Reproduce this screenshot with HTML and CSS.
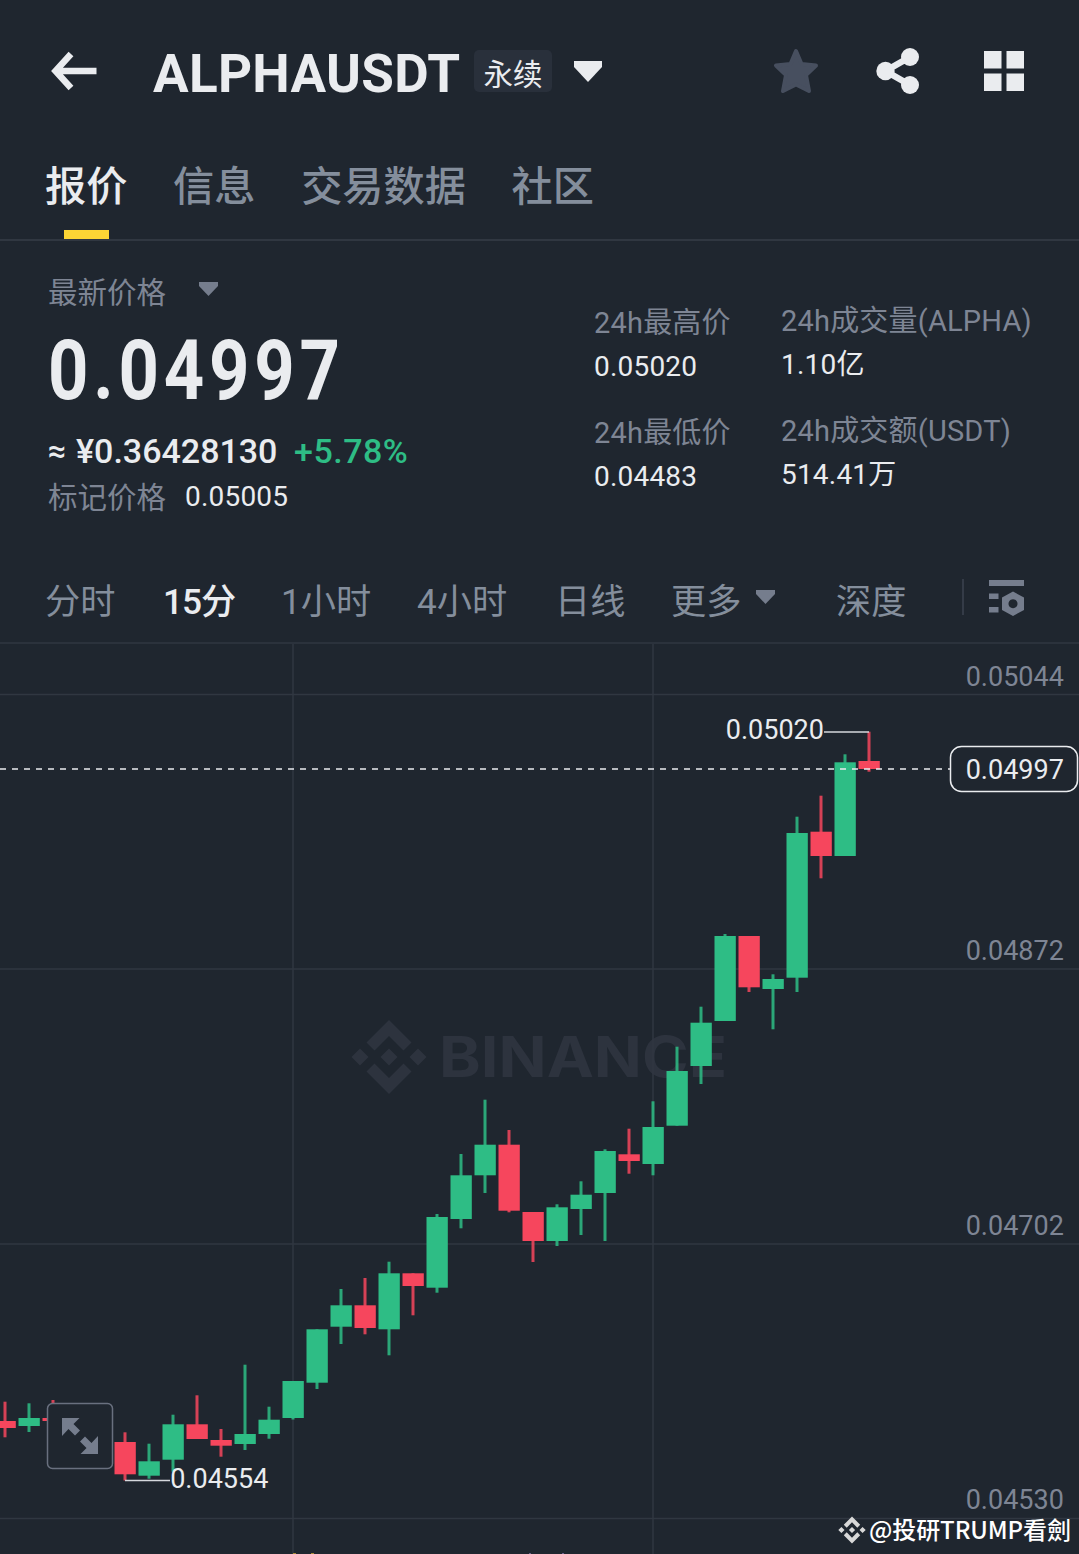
FILE: index.html
```html
<!DOCTYPE html>
<html lang="zh-CN">
<head>
    <meta charset="UTF-8">
    <meta name="viewport" content="width=device-width, initial-scale=1.0">
    <title>ALPHAUSDT 永续</title>
    <link rel="stylesheet" href="styles.css">
</head>
<body>
    <header class="header">
        <svg class="back" width="46" height="40" viewBox="0 0 46 40">
            <path d="M20 3 L4.500 20 L20 37 M5 20 H45.500" fill="none" stroke="#eaecef" stroke-width="6.500"/>
        </svg>
        <h1 class="symbol">ALPHAUSDT</h1>
        <span class="badge">永续</span>
        <svg class="caret" width="28" height="21" viewBox="0 0 28 21">
            <path d="M0 0 H28 V6 L14 21 L0 6 Z" fill="#eaecef"/>
        </svg>
        <div class="actions">
            <svg width="46" height="46" viewBox="0 0 46 46">
                <path d="M23 3 L28.500 16 L43 17.500 L33 27 L36 43 L23 36.500 L10 43 L13 27 L3 17.500 L17.500 16 Z" fill="#474f5f" stroke="#474f5f" stroke-width="4" stroke-linejoin="round"/>
            </svg>
            <svg width="44" height="46" viewBox="0 0 44 46">
                <path d="M34 9 L9.500 23 L34 37" fill="none" stroke="#eaecef" stroke-width="6.500"/>
                <circle cx="34" cy="9" r="9" fill="#eaecef"/>
                <circle cx="9.500" cy="23" r="9.200" fill="#eaecef"/>
                <circle cx="34" cy="37" r="9" fill="#eaecef"/>
            </svg>
            <svg width="40" height="40" viewBox="0 0 40 40">
                <path d="M0 0h17.500v17.500H0z M22.500 0H40v17.500H22.500z M0 22.500h17.500V40H0z M22.500 22.500H40V40H22.500z" fill="#eaecef"/>
            </svg>
        </div>
    </header>

    <nav class="tabs">
        <a class="tab active">报价</a>
        <a class="tab">信息</a>
        <a class="tab">交易数据</a>
        <a class="tab">社区</a>
    </nav>

    <section class="quote">
        <div class="price-block">
            <div class="row label">最新价格
                <svg class="caret-small" width="19" height="14" viewBox="0 0 19 14"><path d="M0 0 H19 V4 L9.500 14 L0 4 Z" fill="#757d8d"/></svg>
            </div>
            <div class="price">0.04997</div>
            <div class="row fiat">
                <span class="approx">≈</span>
                <span class="cny">¥0.36428130</span>
                <span class="change">+5.78%</span>
            </div>
            <div class="row mark"><span class="label">标记价格</span><span>0.05005</span></div>
        </div>
        <div class="stats">
            <div class="label">24h最高价</div>
            <div class="value">0.05020</div>
            <div class="label">24h最低价</div>
            <div class="value">0.04483</div>
        </div>
        <div class="stats volume">
            <div class="label">24h成交量(ALPHA)</div>
            <div class="value">1.10亿</div>
            <div class="label">24h成交额(USDT)</div>
            <div class="value">514.41万</div>
        </div>
    </section>

    <nav class="intervals">
        <a>分时</a>
        <a class="active">15分</a>
        <a>1小时</a>
        <a>4小时</a>
        <a>日线</a>
        <a class="more">更多
            <svg width="19" height="14" viewBox="0 0 19 14"><path d="M0 0 H19 V4 L9.500 14 L0 4 Z" fill="#757d8d"/></svg>
        </a>
        <a>深度</a>
        <span class="divider"></span>
        <svg class="settings" width="36" height="37" viewBox="0 0 36 37">
            <path d="M0 1h35v6H0z M0 14.500h9.500v5.500H0z M0 28h9.500v5.500H0z" fill="#757d8d"/>
            <path fill-rule="evenodd" d="M24 12.500 L35 18.500 V31 L24 37 L13 31 V18.500 Z M24 20.200 a4.500 4.500 0 1 0 .01 0 Z" fill="#757d8d"/>
        </svg>
    </nav>

    <svg class="chart" width="1079" height="910" viewBox="0 644 1079 910">
        <defs>
            <g id="logo">
                <path d="M0 -37 L22.500 -14.500 L14.500 -6.500 L0 -21 L-14.500 -6.500 L-22.500 -14.500 Z"/>
                <path d="M0 37 L22.500 14.500 L14.500 6.500 L0 21 L-14.500 6.500 L-22.500 14.500 Z"/>
                <path d="M0 -8.500 L8.500 0 L0 8.500 L-8.500 0 Z M-29 -8.500 L-20.500 0 L-29 8.500 L-37.500 0 Z M29 -8.500 L37.500 0 L29 8.500 L20.500 0 Z"/>
            </g>
        </defs>

        <g class="watermark">
            <use href="#logo" x="389" y="1057"/>
            <text x="439" y="1077" textLength="288" lengthAdjust="spacingAndGlyphs">BINANCE</text>
        </g>

        <path class="grid" d="M0 694.500H1079 M0 969H1079 M0 1244H1079 M0 1518.500H1079 M293 644V1554 M653 644V1554"/>

        <g id="candles"></g>

        <!-- tops of the volume legend -->
        <path d="M293 1553h3v1h-3z M311 1553h3v1h-3z" fill="#a88a35"/>
        <path d="M529 1553h2v1h-2z M562 1553h2v1h-2z" fill="#6c648f"/>

        <path class="dash" d="M0 769H950"/>
        <path class="pointer" d="M824 732H869 M125 1480.500H170"/>

        <g class="axis">
            <text x="965.700" y="686">0.05044</text>
            <text x="965.700" y="960">0.04872</text>
            <text x="965.700" y="1235">0.04702</text>
            <text x="965.700" y="1509">0.04530</text>
        </g>
        <g class="axis bright">
            <text x="725.800" y="739">0.05020</text>
            <text x="170.200" y="1488">0.04554</text>
            <rect x="950.500" y="746.500" width="127" height="45" rx="11"/>
            <text x="965.700" y="779">0.04997</text>
        </g>

        <g class="expand">
            <rect x="47.500" y="1403.500" width="65" height="65" rx="5"/>
            <path d="M62 1418 H79.500 L73.500 1424 L80 1430.500 L75 1435.500 L68.500 1429 L62 1436 Z"/>
            <path d="M98 1454 H80.500 L86.500 1448 L80 1441.500 L85 1436.500 L91.500 1443 L98 1436 Z"/>
        </g>

        <g class="author">
            <use href="#logo" transform="translate(852 1530) scale(.365)"/>
            <text x="869" y="1539" textLength="202">@投研TRUMP看劍</text>
        </g>
    </svg>

    <script>
        // [x, high, body top, body bottom, low, up?]
        const candles = [
            [5, 1401.7, 1421, 1428, 1437.3, 0],
            [29, 1403.3, 1418, 1426, 1432, 1],
            [53, 1400, 1418, 1421, 1425, 0],
            [125, 1432.3, 1442, 1474.3, 1480.5, 0],
            [149, 1443.7, 1461.3, 1475.7, 1478.7, 1],
            [173, 1414.7, 1424.3, 1459.7, 1471.7, 1],
            [197, 1395.3, 1424.3, 1439, 1439, 0],
            [221, 1429, 1440, 1445.7, 1456.7, 0],
            [245, 1364.7, 1434, 1444, 1450, 1],
            [269, 1406.7, 1419.7, 1434, 1438.7, 1],
            [293, 1381, 1381, 1418, 1419.5, 1],
            [317, 1329.3, 1329.3, 1382.7, 1389, 1],
            [341, 1289, 1305.3, 1326.7, 1344, 1],
            [365, 1278, 1305.3, 1328, 1334.3, 0],
            [389, 1261.7, 1273.3, 1329.3, 1355.3, 1],
            [413, 1273.3, 1273.3, 1286, 1315.3, 0],
            [437, 1214, 1217, 1287.7, 1292.7, 1],
            [461, 1154, 1175.3, 1219, 1228.3, 1],
            [485, 1099.7, 1144.7, 1175.3, 1193, 1],
            [509, 1130, 1144.7, 1210.7, 1212.3, 0],
            [533, 1212, 1212, 1241, 1262, 0],
            [557, 1204.3, 1207.3, 1241, 1246, 1],
            [581, 1181.3, 1194.7, 1209, 1235, 1],
            [605, 1149.3, 1151, 1193, 1241, 1],
            [629, 1128.7, 1154.3, 1161, 1173.7, 0],
            [653, 1101.3, 1127, 1164, 1175.3, 1],
            [677, 1046.7, 1071, 1125.7, 1125.7, 1],
            [701, 1006.7, 1022.7, 1066, 1084, 1],
            [725, 934, 936, 1021, 1021, 1],
            [749, 936, 936, 987.3, 992, 0],
            [773, 974.3, 979, 989, 1029.3, 1],
            [797, 816.7, 833, 977.7, 992, 1],
            [821, 795.7, 831.7, 856, 878.3, 0],
            [845, 754.3, 762.3, 856, 856, 1],
            [869, 731.7, 761, 769, 771.7, 0]
        ];

        document.getElementById('candles').innerHTML = candles.map(function([x, high, top, bottom, low, up]) {
            return `<g class="${up ? 'up' : 'down'}">
                <rect class="wick" x="${x - 1.5}" y="${high}" width="3" height="${low - high}"/>
                <rect x="${x - 10.5}" y="${top}" width="21.3" height="${bottom - top}"/>
            </g>`;
        }).join('');
    </script>
</body>
</html>
```
FILE: styles.css
```css
* {
    box-sizing: border-box;
}
body {
    margin: 0;
    width: 1079px;
    height: 1554px;
    overflow: hidden;
    background-color: #1f262f;
    color: #eaecef;
    font-family: Roboto, "Noto Sans CJK SC", sans-serif;
}
svg {
    display: block;
    flex-shrink: 0;
}
.header {
    display: flex;
    align-items: center;
    height: 142px;
    padding: 0 55px 0 51px;
}
.symbol {
    width: 308px;
    margin: 0 13px 0 56px;
    padding-top: 5px;
    font-size: 53px;
    line-height: 60px;
    font-weight: 700;
    letter-spacing: .3px;
    white-space: nowrap;
}
.badge {
    width: 78px;
    height: 42px;
    padding-top: 2px;
    border-radius: 5px;
    background-color: #29303b;
    font-size: 29.5px;
    line-height: 46px;
    text-align: center;
}
.caret {
    margin-left: 22px;
}
.actions {
    display: flex;
    align-items: center;
    margin-left: auto;
}
.actions svg:nth-child(2) {
    margin: 0 64px 0 57px;
}
.tabs {
    display: flex;
    gap: 45.7px;
    height: 99px;
    padding-left: 45px;
    border-bottom: 2px solid #303741;
    font-size: 41.2px;
    line-height: 90px;
    font-weight: 500;
    color: #848e9c;
}
.tab.active {
    color: #eaecef;
}
.tab.active::after {
    content: "";
    display: block;
    width: 45px;
    height: 9px;
    margin: -2px auto 0;
    background-color: #fcd535;
}
.quote {
    display: grid;
    grid-template-columns: 546px 187px auto;
    height: 317px;
    padding: 32px 0 0 48px;
    line-height: 40px;
}
.label {
    color: #7e8594;
}
.row {
    display: flex;
    align-items: center;
    height: 40px;
    font-size: 29.5px;
}
.caret-small {
    margin: -8px 0 0 33px;
}
.price {
    width: 350px;
    margin: 18px 0 20px;
    font-size: 83px;
    line-height: 80px;
    font-weight: 700;
    letter-spacing: 5.6px;
    transform: scaleX(.85);
    transform-origin: left;
}
.fiat {
    font-size: 34px;
    font-weight: 500;
}
.approx {
    width: 28px;
    font-size: 32px;
}
.cny {
    width: 218px;
}
.change {
    color: #2ebd85;
    letter-spacing: .5px;
}
.mark {
    margin-top: 6px;
    font-size: 28px;
    letter-spacing: .2px;
}
.mark .label {
    width: 137px;
    padding-top: 2px;
    font-size: 29.5px;
    letter-spacing: 0;
}
.stats {
    padding-top: 30px;
    font-size: 29px;
    letter-spacing: .2px;
    white-space: nowrap;
}
.stats .label {
    height: 40px;
}
.stats .value {
    margin: 4px 0 26px;
    font-size: 28px;
}
.volume {
    padding-top: 28px;
}
.intervals {
    display: grid;
    grid-template-columns: 118px 118px 136px 138px 116px 165px 126px 27px auto;
    align-items: center;
    height: 86px;
    padding-left: 45px;
    border-bottom: 2px solid #2b323c;
    font-size: 35.2px;
    line-height: 80px;
    color: #848e9c;
}
.intervals a {
    padding-top: 4px;
}
.intervals .active {
    color: #eaecef;
    font-weight: 500;
    letter-spacing: -1px;
}
.more {
    display: flex;
    align-items: center;
    gap: 15px;
}
.more svg {
    margin-top: -10px;
}
.divider {
    width: 2px;
    height: 36px;
    margin-top: -6px;
    background-color: #343b47;
}
.settings {
    margin-top: -5px;
}
.watermark {
    fill: #2d333e;
    font-family: Inter, sans-serif;
    font-size: 56px;
    font-weight: 700;
}
.grid {
    fill: none;
    stroke: #303741;
    stroke-width: 1.5;
}
.up {
    fill: #2ebd85;
}
.down {
    fill: #f6465d;
}
.wick {
    opacity: .85;
}
.dash {
    stroke: #eaecef;
    stroke-width: 1.5;
    stroke-dasharray: 6 6;
}
.pointer {
    stroke: #d5d8dd;
    stroke-width: 1.7;
}
.axis {
    fill: #7e8594;
    font-size: 27px;
}
.bright {
    fill: #eaecef;
}
.bright rect {
    fill: #1f262f;
    stroke: #eaecef;
    stroke-width: 1.5;
}
.expand rect {
    fill: #1f262f;
    stroke: #69707f;
    stroke-width: 1.5;
}
.expand path {
    fill: #757d8d;
}
.author {
    fill: #fff;
    font-family: "Noto Sans CJK SC", sans-serif;
    font-size: 24px;
    font-weight: 500;
}
.author use {
    fill: #d8d8d8;
}
```
